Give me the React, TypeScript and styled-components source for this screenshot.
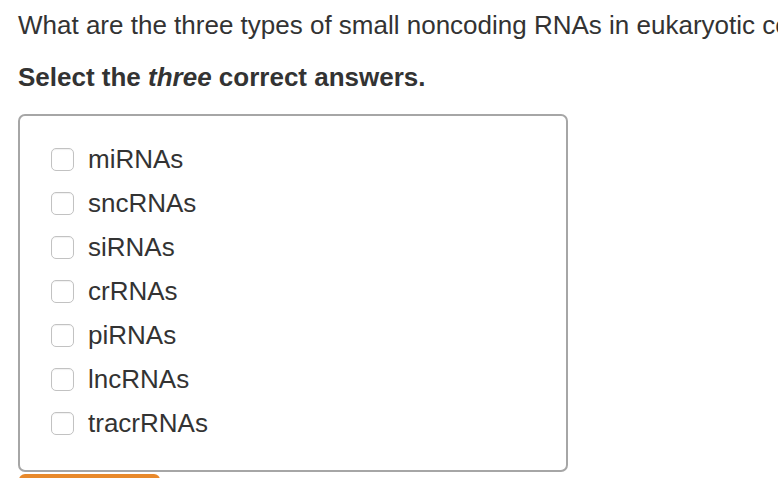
import styled, { createGlobalStyle } from "styled-components";

const GlobalStyle = createGlobalStyle`
  html, body {
    margin: 0;
    padding: 0;
    background: #ffffff;
    overflow: hidden;
  }
  body {
    font-family: "Liberation Sans", Arial, Helvetica, sans-serif;
    color: #333333;
  }
`;

const options = [
  "miRNAs",
  "sncRNAs",
  "siRNAs",
  "crRNAs",
  "piRNAs",
  "lncRNAs",
  "tracrRNAs",
];

const App = () => {
  return (
    <Page>
      <GlobalStyle />
      <Question>
        What are the three types of small noncoding RNAs in eukaryotic cells?
      </Question>
      <Instruction>
        Select the <em>three</em> correct answers.
      </Instruction>
      <AnswerBox>
        {options.map((opt) => (
          <Option key={opt}>
            <CheckBox type="checkbox" />
            <Label>{opt}</Label>
          </Option>
        ))}
      </AnswerBox>
      <SubmitButton aria-label="Submit" />
    </Page>
  );
};

export default App;

const Page = styled.div`
  width: 778px;
  height: 478px;
  padding-left: 18px;
  box-sizing: border-box;
  overflow: hidden;
`;

const Question = styled.div`
  font-size: 26px;
  line-height: 30px;
  padding-top: 10px;
  white-space: nowrap;
`;

const Instruction = styled.div`
  margin-top: 22px;
  font-size: 26px;
  line-height: 30px;
  font-weight: bold;
  white-space: nowrap;

  em {
    font-style: italic;
  }
`;

const AnswerBox = styled.div`
  margin-top: 22px;
  width: 550px;
  height: 358px;
  box-sizing: border-box;
  border: 2px solid #a6a6a6;
  border-radius: 7px;
  padding: 21px 0 0 31px;
  display: flex;
  flex-direction: column;
`;

const Option = styled.label`
  display: flex;
  align-items: center;
  height: 44px;
`;

const CheckBox = styled.input`
  appearance: none;
  margin: 0;
  width: 23px;
  height: 23px;
  box-sizing: border-box;
  border: 1px solid #c2c2c2;
  border-radius: 5px;
  background: #ffffff;
  box-shadow: inset 0 1px 1px rgba(0, 0, 0, 0.06);
`;

const Label = styled.span`
  margin-left: 14px;
  font-size: 26px;
  line-height: 30px;
`;

const SubmitButton = styled.button`
  display: block;
  margin-top: 2px;
  margin-left: 1px;
  width: 141px;
  height: 40px;
  border: none;
  border-radius: 6px 6px 0 0;
  background: #e8892b;
`;
